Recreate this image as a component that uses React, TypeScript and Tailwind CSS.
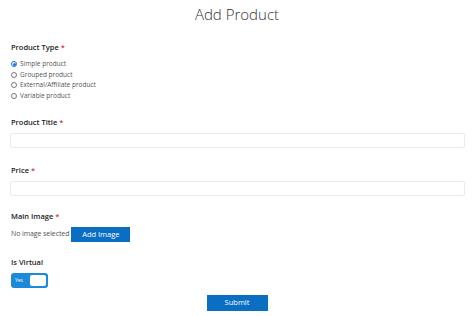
import React from "react";

const Req = () => <span className="text-[#d63638]"> *</span>;

const Radio = ({ label, checked }: { label: string; checked?: boolean }) => (
  <div className="flex items-center h-[10.5px]">
    <span
      className={`w-[6px] h-[6px] rounded-full border ${checked ? "border-[#1a73e8] bg-white flex items-center justify-center" : "border-[#777]"} mr-[3px]`}
    >
      {checked && <span className="block w-[3px] h-[3px] rounded-full bg-[#1a73e8]" />}
    </span>
    <span className="text-[6.5px] text-[#555]">{label}</span>
  </div>
);

export default function App() {
  return (
    <div className="w-[474px] h-[316px] bg-white overflow-hidden" style={{ fontFamily: '"Open Sans", "Noto Sans", sans-serif' }}>
      <h1 className="text-center text-[15px] font-light text-[#333] leading-[20px] pt-[4px]">Add Product</h1>
      <div className="px-[10px]">
        <div className="mt-[18px] text-[7.5px] font-semibold text-[#222] leading-[10px] pl-[1px]">
          Product Type<Req />
        </div>
        <div className="mt-[7px] pl-[1px]">
          <Radio label="Simple product" checked />
          <Radio label="Grouped product" />
          <Radio label="External/Affiliate product" />
          <Radio label="Variable product" />
        </div>
        <div className="mt-[16px] text-[7.5px] font-semibold text-[#222] leading-[10px] pl-[1px]">
          Product Title<Req />
        </div>
        <div className="mt-[6px] h-[15px] w-[455px] border border-[#ebebeb] rounded-[2px]" />
        <div className="mt-[17px] text-[7.5px] font-semibold text-[#222] leading-[10px] pl-[1px]">
          Price<Req />
        </div>
        <div className="mt-[6px] h-[15px] w-[455px] border border-[#ebebeb] rounded-[2px]" />
        <div className="mt-[15px] text-[7.5px] font-semibold text-[#222] leading-[10px] pl-[1px]">
          Main Image<Req />
        </div>
        <div className="mt-[6px] flex items-center pl-[1px]">
          <span className="text-[7px] text-[#555] tracking-[-0.1px]">No image selected</span>
          <span className="ml-[2px] w-[59px] h-[15px] bg-[#0a6fc2] text-white text-[7.5px] flex items-center justify-center">
            Add Image
          </span>
        </div>
        <div className="mt-[15px] text-[7.5px] font-semibold text-[#222] leading-[10px] pl-[1px]">Is Virtual</div>
        <div className="mt-[6px] ml-[1px] w-[37px] h-[15px] rounded-[3px] bg-[#1b8ad8] flex items-center justify-between pl-[4px] pr-[2px]">
          <span className="text-[5px] text-white">Yes</span>
          <span className="w-[16px] h-[11px] bg-white rounded-[2px]" />
        </div>
        <div className="mt-[7px] flex justify-center">
          <span className="w-[61px] h-[16px] bg-[#0a6fc2] text-white text-[7.5px] flex items-center justify-center">Submit</span>
        </div>
      </div>
    </div>
  );
}
